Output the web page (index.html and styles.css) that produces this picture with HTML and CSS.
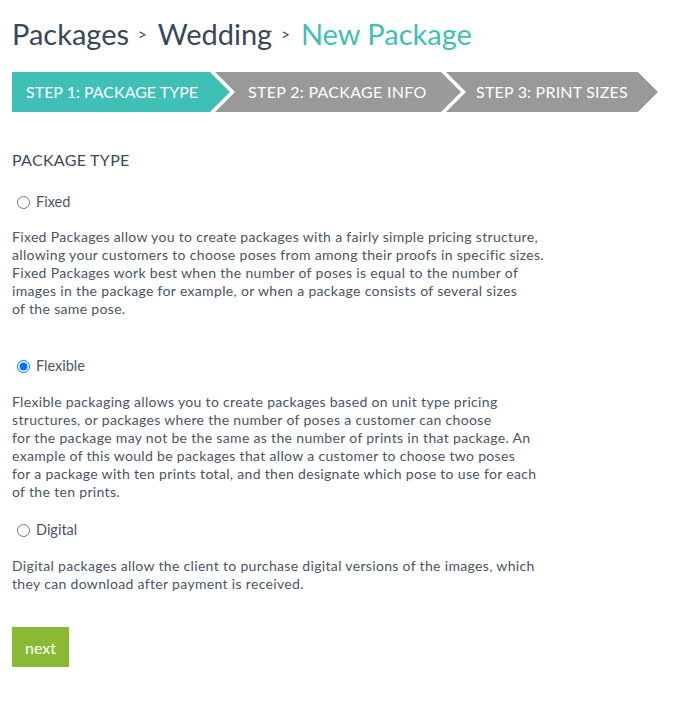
FILE: index.html
```html
<!DOCTYPE html>
<html lang="en">
<head>
<meta charset="utf-8">
<title>New Package</title>
<link rel="stylesheet" href="styles.css">
</head>
<body>
<div class="page">
  <h1 class="crumbs">
    <span class="crumb">Packages</span><span class="sep">&gt;</span><span class="crumb">Wedding</span><span class="sep">&gt;</span><span class="crumb current">New Package</span>
  </h1>

  <div class="steps">
    <div class="step step-1 active">STEP 1: PACKAGE TYPE</div>
    <div class="step step-2">STEP 2: PACKAGE INFO</div>
    <div class="step step-3">STEP 3: PRINT SIZES</div>
  </div>

  <h2 class="section-title">PACKAGE TYPE</h2>

  <label class="option opt-fixed"><input type="radio" name="type"> <span>Fixed</span></label>
  <p class="desc desc-fixed">Fixed Packages allow you to create packages with a fairly simple pricing structure,<br>allowing your customers to choose poses from among their proofs in specific sizes.<br>Fixed Packages work best when the number of poses is equal to the number of<br>images in the package for example, or when a package consists of several sizes<br>of the same pose.</p>

  <label class="option opt-flex"><input type="radio" name="type" checked> <span>Flexible</span></label>
  <p class="desc">Flexible packaging allows you to create packages based on unit type pricing<br>structures, or packages where the number of poses a customer can choose<br>for the package may not be the same as the number of prints in that package. An<br>example of this would be packages that allow a customer to choose two poses<br>for a package with ten prints total, and then designate which pose to use for each<br>of the ten prints.</p>

  <label class="option opt-digital"><input type="radio" name="type"> <span>Digital</span></label>
  <p class="desc">Digital packages allow the client to purchase digital versions of the images, which<br>they can download after payment is received.</p>

  <button class="next" type="button">next</button>
</div>
</body>
</html>
```
FILE: styles.css
```css
html, body {
  margin: 0;
  padding: 0;
  background: #ffffff;
}

body {
  font-family: Lato, "Noto Sans", "Liberation Sans", sans-serif;
  color: #4a5565;
}

.page {
  padding: 0 12px;
}

.crumbs {
  margin: 16px 0 0;
  font-size: 29px;
  line-height: 36px;
  font-weight: 400;
  color: #36485c;
  display: flex;
  align-items: baseline;
}

.sep {
  font-size: 15px;
  margin: 0 11px 0 9px;
  position: relative;
  top: -5px;
}

.current {
  color: #40bfb7;
}

.steps {
  display: flex;
  margin-top: 15px;
  height: 40px;
}

.step {
  height: 40px;
  line-height: 40px;
  color: #ffffff;
  font-size: 16px;
  background: #999999;
  white-space: nowrap;
  box-sizing: border-box;
}

.step.active {
  background: #40bfb7;
}

.step-1 {
  width: 218px;
  padding-left: 14px;
  clip-path: polygon(0 0, calc(100% - 20px) 0, 100% 50%, calc(100% - 20px) 100%, 0 100%);
}

.step-2 {
  width: 246px;
  margin-left: -15px;
  padding-left: 33px;
  letter-spacing: 0.3px;
  clip-path: polygon(0 0, calc(100% - 20px) 0, 100% 50%, calc(100% - 20px) 100%, 0 100%, 20px 50%);
}

.step-3 {
  width: 212px;
  margin-left: -15px;
  padding-left: 30px;
  letter-spacing: 0.2px;
  clip-path: polygon(0 0, calc(100% - 20px) 0, 100% 50%, calc(100% - 20px) 100%, 0 100%, 20px 50%);
}

.section-title {
  margin: 38px 0 0;
  font-size: 16px;
  letter-spacing: 0.3px;
  line-height: 20px;
  font-weight: 400;
  color: #3d4a5b;
}

.option {
  display: flex;
  align-items: center;
  font-size: 14.5px;
  line-height: 20px;
  color: #4a5565;
}

.option input {
  margin: 0 6px 0 5px;
  width: 13px;
  height: 13px;
}

.opt-fixed {
  margin-top: 22px;
}

.opt-flex {
  margin-top: 38px;
}

.opt-digital {
  margin-top: 19px;
}

.desc {
  margin: 17px 0 0;
  font-size: 14px;
  letter-spacing: 0.33px;
  line-height: 18px;
  color: #4a5565;
}

.desc-fixed {
  margin-top: 16px;
}

.next {
  margin-top: 34px;
  width: 57px;
  height: 40px;
  border: none;
  padding: 0;
  background: #8aba33;
  color: #ffffff;
  font-family: Lato, "Noto Sans", "Liberation Sans", sans-serif;
  font-size: 16px;
  cursor: pointer;
}
```
